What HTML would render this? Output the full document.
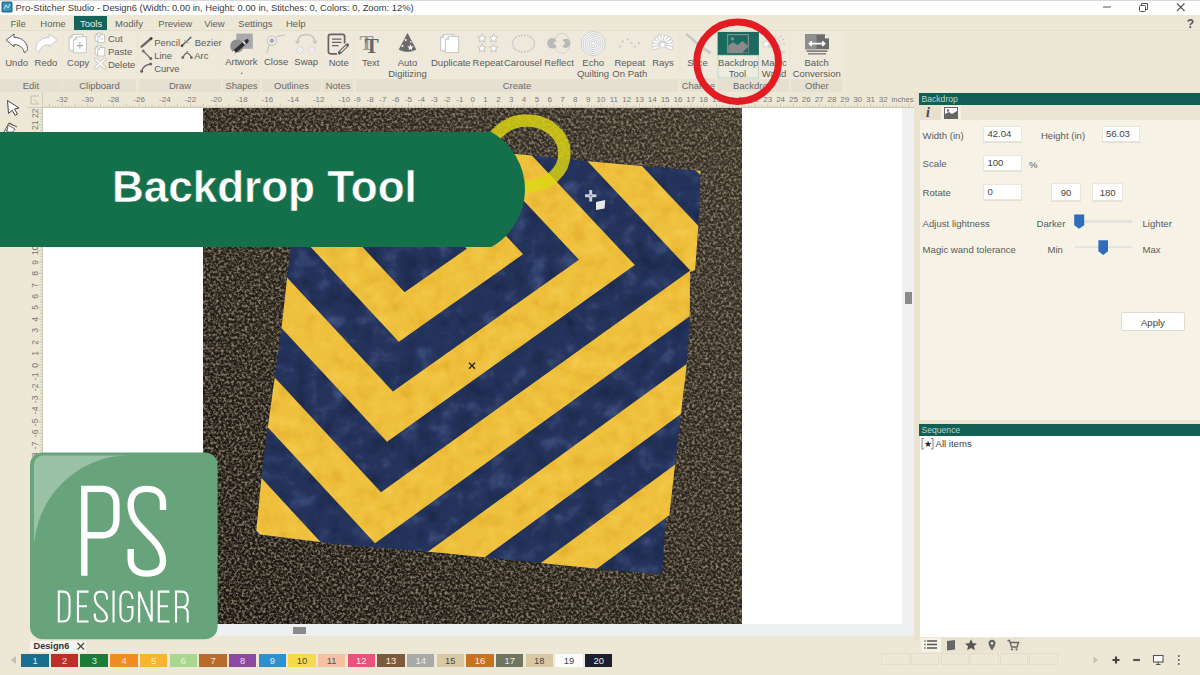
<!DOCTYPE html>
<html><head><meta charset="utf-8">
<style>
*{margin:0;padding:0;box-sizing:border-box}
html,body{width:1200px;height:675px;overflow:hidden;background:#ede7d5;font-family:"Liberation Sans",sans-serif;color:#555}
.a{position:absolute}
.t{position:absolute;white-space:nowrap;line-height:1}
svg{position:absolute;overflow:visible}
</style></head><body>
<div class="a" style="left:0px;top:0px;width:1200px;height:15px;background:#ffffff;"></div>
<div class="a" style="left:0px;top:0px;width:1200px;height:1px;background:#d9d9d9;"></div>
<svg style="left:1px;top:1px" width="12" height="12" viewBox="0 0 12 12"><rect x="0.5" y="0.5" width="11" height="11" rx="1.5" fill="#1f6f96"/><rect x="2" y="2" width="8" height="8" fill="#3f93b8"/><path d="M3,8 L5,4 L7,7 L9,3" stroke="#bfe2ef" stroke-width="1" fill="none"/></svg>
<div class="t" style="left:15.6px;top:3.1px;font-size:9.4px;color:#3a3a3a;font-weight:400;">Pro-Stitcher Studio - Design6 (Width: 0.00 in, Height: 0.00 in, Stitches: 0, Colors: 0, Zoom: 12%)</div>
<svg style="left:1100px;top:2px" width="90" height="11" viewBox="0 0 90 11">
<path d="M3,5 H11" stroke="#555" stroke-width="1"/>
<rect x="39.5" y="3.5" width="6" height="6" fill="none" stroke="#555" stroke-width="1" rx="1"/>
<path d="M41.5,3.5 V1.5 H47.5 V7.5 H45.5" fill="none" stroke="#555" stroke-width="1"/>
<path d="M77,1.5 L84.5,9 M84.5,1.5 L77,9" stroke="#555" stroke-width="1.1"/>
</svg>
<div class="a" style="left:73.6px;top:16px;width:33.1px;height:13.6px;background:#17625a;"></div>
<div class="t" style="left:10.4px;top:18.8px;font-size:9.5px;color:#5e5e5e;font-weight:400;">File</div>
<div class="t" style="left:40.3px;top:18.8px;font-size:9.5px;color:#5e5e5e;font-weight:400;">Home</div>
<div class="t" style="left:115.0px;top:18.8px;font-size:9.5px;color:#5e5e5e;font-weight:400;">Modify</div>
<div class="t" style="left:158.3px;top:18.8px;font-size:9.5px;color:#5e5e5e;font-weight:400;">Preview</div>
<div class="t" style="left:204.3px;top:18.8px;font-size:9.5px;color:#5e5e5e;font-weight:400;">View</div>
<div class="t" style="left:238.3px;top:18.8px;font-size:9.5px;color:#5e5e5e;font-weight:400;">Settings</div>
<div class="t" style="left:286.0px;top:18.8px;font-size:9.5px;color:#5e5e5e;font-weight:400;">Help</div>
<div class="t" style="left:80.0px;top:18.8px;font-size:9.5px;color:#e6f0ec;font-weight:400;">Tools</div>
<div class="t" style="left:1040.5px;top:18.0px;width:300px;text-align:center;font-size:12px;color:#555;font-weight:700;">?</div>
<div class="a" style="left:0px;top:30px;width:1200px;height:1px;background:#e4dece;"></div>
<div class="a" style="left:0px;top:31px;width:61.8px;height:48px;background:#eee9da;"></div>
<div class="a" style="left:0px;top:79px;width:61.8px;height:13px;background:#e5e0d0;"></div>
<div class="t" style="left:-119.1px;top:81.2px;width:300px;text-align:center;font-size:9.5px;color:#6a6a6a;font-weight:400;">Edit</div>
<div class="a" style="left:63px;top:31px;width:73px;height:48px;background:#eee9da;"></div>
<div class="a" style="left:63px;top:79px;width:73px;height:13px;background:#e5e0d0;"></div>
<div class="t" style="left:-50.5px;top:81.2px;width:300px;text-align:center;font-size:9.5px;color:#6a6a6a;font-weight:400;">Clipboard</div>
<div class="a" style="left:139px;top:31px;width:82px;height:48px;background:#eee9da;"></div>
<div class="a" style="left:139px;top:79px;width:82px;height:13px;background:#e5e0d0;"></div>
<div class="t" style="left:30.0px;top:81.2px;width:300px;text-align:center;font-size:9.5px;color:#6a6a6a;font-weight:400;">Draw</div>
<div class="a" style="left:223px;top:31px;width:37px;height:48px;background:#eee9da;"></div>
<div class="a" style="left:223px;top:79px;width:37px;height:13px;background:#e5e0d0;"></div>
<div class="t" style="left:91.5px;top:81.2px;width:300px;text-align:center;font-size:9.5px;color:#6a6a6a;font-weight:400;">Shapes</div>
<div class="a" style="left:262px;top:31px;width:59px;height:48px;background:#eee9da;"></div>
<div class="a" style="left:262px;top:79px;width:59px;height:13px;background:#e5e0d0;"></div>
<div class="t" style="left:141.5px;top:81.2px;width:300px;text-align:center;font-size:9.5px;color:#6a6a6a;font-weight:400;">Outlines</div>
<div class="a" style="left:323px;top:31px;width:30.3px;height:48px;background:#eee9da;"></div>
<div class="a" style="left:323px;top:79px;width:30.3px;height:13px;background:#e5e0d0;"></div>
<div class="t" style="left:188.1px;top:81.2px;width:300px;text-align:center;font-size:9.5px;color:#6a6a6a;font-weight:400;">Notes</div>
<div class="a" style="left:355.8px;top:31px;width:322.5px;height:48px;background:#eee9da;"></div>
<div class="a" style="left:355.8px;top:79px;width:322.5px;height:13px;background:#e5e0d0;"></div>
<div class="t" style="left:367.0px;top:81.2px;width:300px;text-align:center;font-size:9.5px;color:#6a6a6a;font-weight:400;">Create</div>
<div class="a" style="left:680.8px;top:31px;width:35.0px;height:48px;background:#eee9da;"></div>
<div class="a" style="left:680.8px;top:79px;width:35.0px;height:13px;background:#e5e0d0;"></div>
<div class="t" style="left:548.3px;top:81.2px;width:300px;text-align:center;font-size:9.5px;color:#6a6a6a;font-weight:400;">Change</div>
<div class="a" style="left:717px;top:31px;width:72px;height:48px;background:#eee9da;"></div>
<div class="a" style="left:717px;top:79px;width:72px;height:13px;background:#e5e0d0;"></div>
<div class="t" style="left:603.0px;top:81.2px;width:300px;text-align:center;font-size:9.5px;color:#6a6a6a;font-weight:400;">Backdrop</div>
<div class="a" style="left:791.3px;top:31px;width:51.2px;height:48px;background:#eee9da;"></div>
<div class="a" style="left:791.3px;top:79px;width:51.2px;height:13px;background:#e5e0d0;"></div>
<div class="t" style="left:666.9px;top:81.2px;width:300px;text-align:center;font-size:9.5px;color:#6a6a6a;font-weight:400;">Other</div>
<svg style="left:0;top:0" width="1200" height="92"><path d="M6.2,40 L14,34 L14,37.3 C21.5,37.3 27.5,42.5 27.5,48.5 C27.5,50 27,51.5 24.2,52.8 C24,48.5 20,44.6 14,44.6 L14,46.8 Z" fill="#fff" stroke="#4a4a4a" stroke-width="0.9" stroke-linejoin="round"/><path d="M57,40 L49.2,34 L49.2,37.3 C41.7,37.3 36,42.5 36,48.5 C36,50 36.5,51.5 39,52.8 C39.2,48.5 43.2,44.6 49.2,44.6 L49.2,46.8 Z" fill="#fff" stroke="#c4c4c4" stroke-width="0.9" stroke-linejoin="round"/><path d="M72.2,34.5 H82.8 V50.8 H69.2 V37.5 Z M69.2,37.5 H72.2 V34.5" fill="#fff" stroke="#b9b9b9" stroke-width="0.8" stroke-linejoin="round"/><path d="M76.4,36.8 H86.4 V52.8 H73.4 V39.8 Z M73.4,39.8 H76.4 V36.8" fill="#fff" stroke="#b9b9b9" stroke-width="0.8" stroke-linejoin="round"/><path d="M76.7,45.6 H83.1 M79.9,42.4 V48.8" stroke="#a8a8a8" stroke-width="1.1"/><path d="M97.2,33.2 H101.7 V41.2 H95.2 V35.2 Z M95.2,35.2 H97.2 V33.2" fill="#fff" stroke="#b9b9b9" stroke-width="0.8" stroke-linejoin="round"/><path d="M99.7,34.7 H104.7 V42.7 H97.7 V36.7 Z M97.7,36.7 H99.7 V34.7" fill="#fff" stroke="#b9b9b9" stroke-width="0.8" stroke-linejoin="round"/><path d="M99.5,38.8 H103" stroke="#bbb" stroke-width="0.8"/><path d="M97.2,45.9 H101.7 V54.4 H95.2 V47.9 Z M95.2,47.9 H97.2 V45.9" fill="#fff" stroke="#b9b9b9" stroke-width="0.8" stroke-linejoin="round"/><path d="M99.7,47.5 H104.7 V56 H97.7 V49.5 Z M97.7,49.5 H99.7 V47.5" fill="#fff" stroke="#b9b9b9" stroke-width="0.8" stroke-linejoin="round"/><path d="M95.6,59.2 L105,67.8 M105,59.2 L95.6,67.8" stroke="#c2c2c2" stroke-width="3.2" stroke-linecap="round"/><path d="M95.6,59.2 L105,67.8 M105,59.2 L95.6,67.8" stroke="#fff" stroke-width="1.6" stroke-linecap="round"/><path d="M141.6,46.6 L151.5,38.2" stroke="#6a6a6a" stroke-width="2.4" stroke-linecap="round"/><path d="M150,39.4 L151.8,37.9" stroke="#444" stroke-width="2.6"/><path d="M182,45.8 L190.6,37.6" stroke="#555" stroke-width="1.3"/><path d="M184,40.5 L188.5,43" stroke="#999" stroke-width="1"/><circle cx="182" cy="45.8" r="1.2" fill="#333"/><circle cx="190.6" cy="37.6" r="1.1" fill="#777"/><path d="M143.2,51 L150.8,58.6" stroke="#6a6a6a" stroke-width="1.3"/><circle cx="143.2" cy="51" r="1.5" fill="#777"/><circle cx="150.8" cy="58.6" r="1.5" fill="#666"/><path d="M182.8,57.6 Q187.1,48.5 191.4,57.6" stroke="#6a6a6a" stroke-width="1.3" fill="none"/><circle cx="182.8" cy="57.6" r="1.4" fill="#666"/><circle cx="191.4" cy="57.6" r="1.4" fill="#666"/><circle cx="187.1" cy="52" r="1" fill="#888"/><path d="M141.6,71.2 Q143,65.2 150.6,64" stroke="#6a6a6a" stroke-width="1.3" fill="none"/><circle cx="141.6" cy="71.2" r="1.5" fill="#666"/><circle cx="150.6" cy="64" r="1.5" fill="#666"/><rect x="236.3" y="33.6" width="16.5" height="15.2" fill="#a9a9ab"/><circle cx="236.8" cy="46" r="6.6" fill="#8e8e8e"/><path d="M233.6,52.3 L247,41" stroke="#2f2f2f" stroke-width="3.6" stroke-linecap="round"/><path d="M232.3,53.6 L234.8,51.5" stroke="#fff" stroke-width="3"/><path d="M243.6,43.5 L245,42.3" stroke="#ddd" stroke-width="3.8"/><circle cx="241.7" cy="73.3" r="0.8" fill="#666"/><circle cx="271.8" cy="40.6" r="4.6" fill="#f4f4f4" stroke="#c4c4c4" stroke-width="1.2"/><circle cx="271.8" cy="40.6" r="2.4" fill="#a9a9a9"/><path d="M269.3,45 L267,52.8 M276.4,37 Q279,35.5 285,35" stroke="#c4c4c4" stroke-width="1.2" fill="none"/><path d="M297.5,42.5 Q298,34.5 306.2,34.5 Q314.5,34.5 315,42.5" stroke="#c6c6c6" stroke-width="1.6" fill="none"/><path d="M294.8,40.8 L297.5,44.5 L300.5,40.8 Z M312.2,40.8 L315,44.5 L317.8,40.8 Z" fill="#c6c6c6"/><circle cx="300.2" cy="50" r="3.3" fill="#f6f6f6" stroke="#cfcfcf" stroke-width="0.8"/><path d="M298.4,48.2 L302.0,51.8 M302.0,48.2 L298.4,51.8" stroke="#d8d8d8" stroke-width="0.7"/><circle cx="311.8" cy="50" r="3.3" fill="#f6f6f6" stroke="#cfcfcf" stroke-width="0.8"/><path d="M310.0,48.2 L313.6,51.8 M313.6,48.2 L310.0,51.8" stroke="#d8d8d8" stroke-width="0.7"/><path d="M344.6,43.5 V36.6 Q344.6,34.4 342.4,34.4 H330.6 Q328.4,34.4 328.4,36.6 V51.6 Q328.4,53.8 330.6,53.8 H337" stroke="#636363" stroke-width="1.7" fill="none"/><path d="M332,39.2 H341.5 M332,42.4 H341.5 M332,45.6 H338.5" stroke="#636363" stroke-width="1.3"/><path d="M339.5,52.8 L347.4,45" stroke="#636363" stroke-width="3.4" stroke-linecap="round"/><path d="M340.6,51.7 L346.4,46" stroke="#eee9da" stroke-width="1.3"/><text x="359.6" y="49.6" font-family="Liberation Serif" font-weight="700" font-size="21" fill="#9c9c9c">T</text><text x="364.8" y="52.6" font-family="Liberation Serif" font-weight="700" font-size="21" fill="#666">T</text><path d="M407.5,33.6 L399.2,49.5 Q407.5,53.5 415.8,49.5 Z" fill="#6a6a6a" stroke="#6a6a6a" stroke-width="0.8" stroke-linejoin="round"/><polygon points="410.50,44.30 411.35,46.34 413.54,46.51 411.87,47.94 412.38,50.09 410.50,48.94 408.62,50.09 409.13,47.94 407.46,46.51 409.65,46.34" fill="#fff" stroke="none" stroke-width="0.8" stroke-linejoin="round"/><polygon points="405.70,38.40 406.12,39.42 407.22,39.51 406.38,40.22 406.64,41.29 405.70,40.72 404.76,41.29 405.02,40.22 404.18,39.51 405.28,39.42" fill="#fff" stroke="none" stroke-width="0.8" stroke-linejoin="round"/><polygon points="402.50,44.50 402.90,45.45 403.93,45.54 403.14,46.21 403.38,47.21 402.50,46.67 401.62,47.21 401.86,46.21 401.07,45.54 402.10,45.45" fill="#fff" stroke="none" stroke-width="0.8" stroke-linejoin="round"/><polygon points="410.80,40.80 411.12,41.56 411.94,41.63 411.31,42.17 411.51,42.97 410.80,42.54 410.09,42.97 410.29,42.17 409.66,41.63 410.48,41.56" fill="#fff" stroke="none" stroke-width="0.8" stroke-linejoin="round"/><path d="M443.6,34.6 H453.8 V50.8 H440.6 V37.6 Z M440.6,37.6 H443.6 V34.6" fill="#fff" stroke="#b9b9b9" stroke-width="0.8" stroke-linejoin="round"/><path d="M448.4,36.4 H458.6 V52.6 H445.4 V39.4 Z M445.4,39.4 H448.4 V36.4" fill="#fff" stroke="#b9b9b9" stroke-width="0.8" stroke-linejoin="round"/><polygon points="482.00,33.80 483.22,36.73 486.37,36.98 483.97,39.04 484.70,42.12 482.00,40.47 479.30,42.12 480.03,39.04 477.63,36.98 480.78,36.73" fill="#fff" stroke="#bdbdbd" stroke-width="0.9" stroke-linejoin="round"/><polygon points="493.60,33.80 494.82,36.73 497.97,36.98 495.57,39.04 496.30,42.12 493.60,40.47 490.90,42.12 491.63,39.04 489.23,36.98 492.38,36.73" fill="#fff" stroke="#bdbdbd" stroke-width="0.9" stroke-linejoin="round"/><polygon points="482.00,43.80 483.22,46.73 486.37,46.98 483.97,49.04 484.70,52.12 482.00,50.47 479.30,52.12 480.03,49.04 477.63,46.98 480.78,46.73" fill="#fff" stroke="#bdbdbd" stroke-width="0.9" stroke-linejoin="round"/><polygon points="493.60,43.80 494.82,46.73 497.97,46.98 495.57,49.04 496.30,52.12 493.60,50.47 490.90,52.12 491.63,49.04 489.23,46.98 492.38,46.73" fill="#fff" stroke="#bdbdbd" stroke-width="0.9" stroke-linejoin="round"/><circle cx="534.40" cy="43.60" r="0.9" fill="#c3c3c3"/><circle cx="533.95" cy="45.97" r="0.9" fill="#c3c3c3"/><circle cx="532.65" cy="48.14" r="0.9" fill="#c3c3c3"/><circle cx="530.60" cy="49.95" r="0.9" fill="#c3c3c3"/><circle cx="527.97" cy="51.24" r="0.9" fill="#c3c3c3"/><circle cx="524.97" cy="51.91" r="0.9" fill="#c3c3c3"/><circle cx="521.83" cy="51.91" r="0.9" fill="#c3c3c3"/><circle cx="518.83" cy="51.24" r="0.9" fill="#c3c3c3"/><circle cx="516.20" cy="49.95" r="0.9" fill="#c3c3c3"/><circle cx="514.15" cy="48.14" r="0.9" fill="#c3c3c3"/><circle cx="512.85" cy="45.97" r="0.9" fill="#c3c3c3"/><circle cx="512.40" cy="43.60" r="0.9" fill="#c3c3c3"/><circle cx="512.85" cy="41.23" r="0.9" fill="#c3c3c3"/><circle cx="514.15" cy="39.06" r="0.9" fill="#c3c3c3"/><circle cx="516.20" cy="37.25" r="0.9" fill="#c3c3c3"/><circle cx="518.83" cy="35.96" r="0.9" fill="#c3c3c3"/><circle cx="521.83" cy="35.29" r="0.9" fill="#c3c3c3"/><circle cx="524.97" cy="35.29" r="0.9" fill="#c3c3c3"/><circle cx="527.97" cy="35.96" r="0.9" fill="#c3c3c3"/><circle cx="530.60" cy="37.25" r="0.9" fill="#c3c3c3"/><circle cx="532.65" cy="39.06" r="0.9" fill="#c3c3c3"/><circle cx="533.95" cy="41.23" r="0.9" fill="#c3c3c3"/><ellipse cx="562" cy="43.3" rx="7.9" ry="10" fill="none" stroke="#d0d0d0" stroke-width="1"/><path d="M556.8,40.6 A5.2,5.2 0 1 0 556.8,46 L553,43.3 Z" fill="#b9b9b9"/><path d="M562.4,40.2 A4.6,4.6 0 1 1 562.4,46.4 L565.2,43.3 Z" fill="#b9b9b9"/><circle cx="593.2" cy="43.6" r="12" fill="#fafafa" stroke="#c2c2c2" stroke-width="0.8"/><circle cx="593.2" cy="43.6" r="10" fill="none" stroke="#c2c2c2" stroke-width="0.8"/><circle cx="593.2" cy="43.6" r="8" fill="none" stroke="#c2c2c2" stroke-width="0.8"/><circle cx="593.2" cy="43.6" r="6" fill="none" stroke="#c2c2c2" stroke-width="0.8"/><circle cx="593.2" cy="43.6" r="4" fill="none" stroke="#c2c2c2" stroke-width="0.8"/><circle cx="593.2" cy="43.6" r="2" fill="none" stroke="#c2c2c2" stroke-width="0.8"/><circle cx="620.2" cy="46.6" r="1.1" fill="#c6c6c6"/><circle cx="622.8" cy="41.6" r="1.1" fill="#c6c6c6"/><circle cx="627.6" cy="39.4" r="1.1" fill="#c6c6c6"/><circle cx="631.6" cy="43" r="1.1" fill="#c6c6c6"/><circle cx="634.8" cy="46.5" r="1.1" fill="#c6c6c6"/><circle cx="638.8" cy="43.2" r="1.1" fill="#c6c6c6"/><ellipse cx="655.83" cy="47.46" rx="3.9" ry="1.7" transform="rotate(160.0 655.83 47.46)" fill="#fff" stroke="#c6c6c6" stroke-width="0.8"/><ellipse cx="655.40" cy="44.75" rx="3.9" ry="1.7" transform="rotate(182.0 655.40 44.75)" fill="#fff" stroke="#c6c6c6" stroke-width="0.8"/><ellipse cx="656.02" cy="42.07" rx="3.9" ry="1.7" transform="rotate(204.0 656.02 42.07)" fill="#fff" stroke="#c6c6c6" stroke-width="0.8"/><ellipse cx="657.60" cy="39.82" rx="3.9" ry="1.7" transform="rotate(226.0 657.60 39.82)" fill="#fff" stroke="#c6c6c6" stroke-width="0.8"/><ellipse cx="659.90" cy="38.32" rx="3.9" ry="1.7" transform="rotate(248.0 659.90 38.32)" fill="#fff" stroke="#c6c6c6" stroke-width="0.8"/><ellipse cx="662.60" cy="37.80" rx="3.9" ry="1.7" transform="rotate(270.0 662.60 37.80)" fill="#fff" stroke="#c6c6c6" stroke-width="0.8"/><ellipse cx="665.30" cy="38.32" rx="3.9" ry="1.7" transform="rotate(292.0 665.30 38.32)" fill="#fff" stroke="#c6c6c6" stroke-width="0.8"/><ellipse cx="667.60" cy="39.82" rx="3.9" ry="1.7" transform="rotate(314.0 667.60 39.82)" fill="#fff" stroke="#c6c6c6" stroke-width="0.8"/><ellipse cx="669.18" cy="42.07" rx="3.9" ry="1.7" transform="rotate(336.0 669.18 42.07)" fill="#fff" stroke="#c6c6c6" stroke-width="0.8"/><ellipse cx="669.80" cy="44.75" rx="3.9" ry="1.7" transform="rotate(358.0 669.80 44.75)" fill="#fff" stroke="#c6c6c6" stroke-width="0.8"/><ellipse cx="669.37" cy="47.46" rx="3.9" ry="1.7" transform="rotate(380.0 669.37 47.46)" fill="#fff" stroke="#c6c6c6" stroke-width="0.8"/><circle cx="662.6" cy="45" r="2.3" fill="#fff" stroke="#ccc" stroke-width="0.6"/><path d="M686.8,34.6 L701,46.5 L709.7,52.6" stroke="#c9c9c9" stroke-width="2.6" stroke-linecap="round"/><rect x="717.6" y="31.9" width="41.3" height="23.5" fill="#1b6a5f"/><rect x="718.1" y="55.4" width="40.3" height="22.6" fill="#eceddf" stroke="#bcd7cb" stroke-width="1"/><rect x="727.6" y="34.6" width="20.8" height="18" fill="none" stroke="#8a8a8a" stroke-width="1.2"/><path d="M728.2,52 V45.5 L733,42 L737.5,45 L742.5,41 L747.8,45.5 V47.5 L742.8,52 Z" fill="#8a8a8a"/><circle cx="732.4" cy="38.8" r="1.7" fill="#8a8a8a"/><path d="M742.8,52.6 L748.4,47 L748.4,52.6 Z" fill="#1b6a5f"/><path d="M768,45.5 L784,52.5" stroke="#d4d4d4" stroke-width="2.2" stroke-linecap="round"/><polygon points="766.00,39.60 767.16,42.40 770.18,42.64 767.88,44.61 768.59,47.56 766.00,45.98 763.41,47.56 764.12,44.61 761.82,42.64 764.84,42.40" fill="#fff" stroke="#cfcfcf" stroke-width="0.8" stroke-linejoin="round"/><circle cx="775.4" cy="36.2" r="0.8" fill="#bdbdbd"/><circle cx="778.2" cy="38" r="0.8" fill="#bdbdbd"/><circle cx="781.2" cy="36" r="0.8" fill="#bdbdbd"/><circle cx="783.2" cy="39.6" r="0.8" fill="#bdbdbd"/><circle cx="779.8" cy="41.5" r="0.8" fill="#bdbdbd"/><circle cx="784" cy="43.4" r="0.8" fill="#bdbdbd"/><path d="M805,34.2 H825 L829,38.2 V49.2 H805 Z" fill="#6c6c6c"/><path d="M805,34.2 H816.5 V49.2 H805 Z" fill="#8e8e8e"/><path d="M825,34.2 L829,38.2 H825 Z" fill="#fff"/><path d="M809.6,43.6 H824.4 M811.8,41.4 L809.3,43.6 L811.8,45.8 M822.2,41.4 L824.7,43.6 L822.2,45.8" stroke="#fff" stroke-width="1.6" fill="none" stroke-linejoin="round"/><rect x="806.5" y="50.3" width="21" height="1.6" fill="#777"/><rect x="808" y="53" width="18" height="1.6" fill="#8a8a8a"/></svg>
<div class="t" style="left:-133.4px;top:57.6px;width:300px;text-align:center;font-size:9.5px;color:#5b5b5b;font-weight:400;">Undo</div>
<div class="t" style="left:-104.1px;top:57.6px;width:300px;text-align:center;font-size:9.5px;color:#5b5b5b;font-weight:400;">Redo</div>
<div class="t" style="left:-71.9px;top:57.9px;width:300px;text-align:center;font-size:9.5px;color:#5b5b5b;font-weight:400;">Copy</div>
<div class="t" style="left:107.9px;top:34.1px;font-size:9.5px;color:#5b5b5b;font-weight:400;">Cut</div>
<div class="t" style="left:107.9px;top:46.5px;font-size:9.5px;color:#5b5b5b;font-weight:400;">Paste</div>
<div class="t" style="left:107.9px;top:59.6px;font-size:9.5px;color:#5b5b5b;font-weight:400;">Delete</div>
<div class="t" style="left:154.2px;top:37.9px;font-size:9.5px;color:#5b5b5b;font-weight:400;">Pencil</div>
<div class="t" style="left:154.2px;top:51.4px;font-size:9.5px;color:#5b5b5b;font-weight:400;">Line</div>
<div class="t" style="left:154.2px;top:64.1px;font-size:9.5px;color:#5b5b5b;font-weight:400;">Curve</div>
<div class="t" style="left:194.7px;top:37.9px;font-size:9.5px;color:#5b5b5b;font-weight:400;">Bezier</div>
<div class="t" style="left:194.2px;top:51.4px;font-size:9.5px;color:#5b5b5b;font-weight:400;">Arc</div>
<div class="t" style="left:91.3px;top:57.4px;width:300px;text-align:center;font-size:9.5px;color:#5b5b5b;font-weight:400;">Artwork</div>
<div class="t" style="left:126.1px;top:57.4px;width:300px;text-align:center;font-size:9.5px;color:#5b5b5b;font-weight:400;">Close</div>
<div class="t" style="left:156.2px;top:57.4px;width:300px;text-align:center;font-size:9.5px;color:#5b5b5b;font-weight:400;">Swap</div>
<div class="t" style="left:188.7px;top:57.9px;width:300px;text-align:center;font-size:9.5px;color:#5b5b5b;font-weight:400;">Note</div>
<div class="t" style="left:220.7px;top:57.9px;width:300px;text-align:center;font-size:9.5px;color:#5b5b5b;font-weight:400;">Text</div>
<div class="t" style="left:257.5px;top:57.9px;width:300px;text-align:center;font-size:9.5px;color:#5b5b5b;font-weight:400;">Auto</div>
<div class="t" style="left:257.5px;top:69.1px;width:300px;text-align:center;font-size:9.5px;color:#5b5b5b;font-weight:400;">Digitizing</div>
<div class="t" style="left:300.8px;top:57.9px;width:300px;text-align:center;font-size:9.5px;color:#5b5b5b;font-weight:400;">Duplicate</div>
<div class="t" style="left:337.9px;top:57.9px;width:300px;text-align:center;font-size:9.5px;color:#5b5b5b;font-weight:400;">Repeat</div>
<div class="t" style="left:372.9px;top:57.9px;width:300px;text-align:center;font-size:9.5px;color:#5b5b5b;font-weight:400;">Carousel</div>
<div class="t" style="left:409.0px;top:57.9px;width:300px;text-align:center;font-size:9.5px;color:#5b5b5b;font-weight:400;">Reflect</div>
<div class="t" style="left:443.2px;top:57.9px;width:300px;text-align:center;font-size:9.5px;color:#5b5b5b;font-weight:400;">Echo</div>
<div class="t" style="left:443.0px;top:69.1px;width:300px;text-align:center;font-size:9.5px;color:#5b5b5b;font-weight:400;">Quilting</div>
<div class="t" style="left:479.8px;top:57.9px;width:300px;text-align:center;font-size:9.5px;color:#5b5b5b;font-weight:400;">Repeat</div>
<div class="t" style="left:479.8px;top:69.1px;width:300px;text-align:center;font-size:9.5px;color:#5b5b5b;font-weight:400;">On Path</div>
<div class="t" style="left:513.0px;top:57.9px;width:300px;text-align:center;font-size:9.5px;color:#5b5b5b;font-weight:400;">Rays</div>
<div class="t" style="left:547.5px;top:57.9px;width:300px;text-align:center;font-size:9.5px;color:#5b5b5b;font-weight:400;">Slice</div>
<div class="t" style="left:588.2px;top:57.9px;width:300px;text-align:center;font-size:9.5px;color:#5b5b5b;font-weight:400;">Backdrop</div>
<div class="t" style="left:587.5px;top:68.7px;width:300px;text-align:center;font-size:9.5px;color:#5b5b5b;font-weight:400;">Tool</div>
<div class="t" style="left:624.0px;top:57.9px;width:300px;text-align:center;font-size:9.5px;color:#5b5b5b;font-weight:400;">Magic</div>
<div class="t" style="left:624.0px;top:68.7px;width:300px;text-align:center;font-size:9.5px;color:#5b5b5b;font-weight:400;">Wand</div>
<div class="t" style="left:666.7px;top:57.9px;width:300px;text-align:center;font-size:9.5px;color:#5b5b5b;font-weight:400;">Batch</div>
<div class="t" style="left:666.7px;top:68.7px;width:300px;text-align:center;font-size:9.5px;color:#5b5b5b;font-weight:400;">Conversion</div>
<div class="a" style="left:27px;top:92px;width:889px;height:16px;background:#ede7d5;"></div>
<svg style="left:0;top:0" width="1200" height="120"><path d="M46.1,105.7V107.5M49.3,103.5V107.5M52.5,105.7V107.5M55.7,105.0V107.5M58.9,105.7V107.5M62.1,103.5V107.5M65.3,105.7V107.5M68.6,105.0V107.5M71.8,105.7V107.5M75.0,103.5V107.5M78.2,105.7V107.5M81.4,105.0V107.5M84.6,105.7V107.5M87.8,103.5V107.5M91.0,105.7V107.5M94.2,105.0V107.5M97.4,105.7V107.5M100.6,103.5V107.5M103.8,105.7V107.5M107.0,105.0V107.5M110.3,105.7V107.5M113.5,103.5V107.5M116.7,105.7V107.5M119.9,105.0V107.5M123.1,105.7V107.5M126.3,103.5V107.5M129.5,105.7V107.5M132.7,105.0V107.5M135.9,105.7V107.5M139.1,103.5V107.5M142.3,105.7V107.5M145.5,105.0V107.5M148.7,105.7V107.5M151.9,103.5V107.5M155.2,105.7V107.5M158.4,105.0V107.5M161.6,105.7V107.5M164.8,103.5V107.5M168.0,105.7V107.5M171.2,105.0V107.5M174.4,105.7V107.5M177.6,103.5V107.5M180.8,105.7V107.5M184.0,105.0V107.5M187.2,105.7V107.5M190.4,103.5V107.5M193.6,105.7V107.5M196.9,105.0V107.5M200.1,105.7V107.5M203.3,103.5V107.5M206.5,105.7V107.5M209.7,105.0V107.5M212.9,105.7V107.5M216.1,103.5V107.5M219.3,105.7V107.5M222.5,105.0V107.5M225.7,105.7V107.5M228.9,103.5V107.5M232.1,105.7V107.5M235.3,105.0V107.5M238.6,105.7V107.5M241.8,103.5V107.5M245.0,105.7V107.5M248.2,105.0V107.5M251.4,105.7V107.5M254.6,103.5V107.5M257.8,105.7V107.5M261.0,105.0V107.5M264.2,105.7V107.5M267.4,103.5V107.5M270.6,105.7V107.5M273.8,105.0V107.5M277.0,105.7V107.5M280.2,103.5V107.5M283.5,105.7V107.5M286.7,105.0V107.5M289.9,105.7V107.5M293.1,103.5V107.5M296.3,105.7V107.5M299.5,105.0V107.5M302.7,105.7V107.5M305.9,103.5V107.5M309.1,105.7V107.5M312.3,105.0V107.5M315.5,105.7V107.5M318.7,103.5V107.5M321.9,105.7V107.5M325.2,105.0V107.5M328.4,105.7V107.5M331.6,103.5V107.5M334.8,105.7V107.5M338.0,105.0V107.5M341.2,105.7V107.5M344.4,103.5V107.5M347.6,105.7V107.5M350.8,105.0V107.5M354.0,105.7V107.5M357.2,103.5V107.5M360.4,105.7V107.5M363.6,105.0V107.5M366.9,105.7V107.5M370.1,103.5V107.5M373.3,105.7V107.5M376.5,105.0V107.5M379.7,105.7V107.5M382.9,103.5V107.5M386.1,105.7V107.5M389.3,105.0V107.5M392.5,105.7V107.5M395.7,103.5V107.5M398.9,105.7V107.5M402.1,105.0V107.5M405.3,105.7V107.5M408.5,103.5V107.5M411.8,105.7V107.5M415.0,105.0V107.5M418.2,105.7V107.5M421.4,103.5V107.5M424.6,105.7V107.5M427.8,105.0V107.5M431.0,105.7V107.5M434.2,103.5V107.5M437.4,105.7V107.5M440.6,105.0V107.5M443.8,105.7V107.5M447.0,103.5V107.5M450.2,105.7V107.5M453.5,105.0V107.5M456.7,105.7V107.5M459.9,103.5V107.5M463.1,105.7V107.5M466.3,105.0V107.5M469.5,105.7V107.5M472.7,103.5V107.5M475.9,105.7V107.5M479.1,105.0V107.5M482.3,105.7V107.5M485.5,103.5V107.5M488.7,105.7V107.5M491.9,105.0V107.5M495.2,105.7V107.5M498.4,103.5V107.5M501.6,105.7V107.5M504.8,105.0V107.5M508.0,105.7V107.5M511.2,103.5V107.5M514.4,105.7V107.5M517.6,105.0V107.5M520.8,105.7V107.5M524.0,103.5V107.5M527.2,105.7V107.5M530.4,105.0V107.5M533.6,105.7V107.5M536.9,103.5V107.5M540.1,105.7V107.5M543.3,105.0V107.5M546.5,105.7V107.5M549.7,103.5V107.5M552.9,105.7V107.5M556.1,105.0V107.5M559.3,105.7V107.5M562.5,103.5V107.5M565.7,105.7V107.5M568.9,105.0V107.5M572.1,105.7V107.5M575.3,103.5V107.5M578.5,105.7V107.5M581.8,105.0V107.5M585.0,105.7V107.5M588.2,103.5V107.5M591.4,105.7V107.5M594.6,105.0V107.5M597.8,105.7V107.5M601.0,103.5V107.5M604.2,105.7V107.5M607.4,105.0V107.5M610.6,105.7V107.5M613.8,103.5V107.5M617.0,105.7V107.5M620.2,105.0V107.5M623.5,105.7V107.5M626.7,103.5V107.5M629.9,105.7V107.5M633.1,105.0V107.5M636.3,105.7V107.5M639.5,103.5V107.5M642.7,105.7V107.5M645.9,105.0V107.5M649.1,105.7V107.5M652.3,103.5V107.5M655.5,105.7V107.5M658.7,105.0V107.5M661.9,105.7V107.5M665.1,103.5V107.5M668.4,105.7V107.5M671.6,105.0V107.5M674.8,105.7V107.5M678.0,103.5V107.5M681.2,105.7V107.5M684.4,105.0V107.5M687.6,105.7V107.5M690.8,103.5V107.5M694.0,105.7V107.5M697.2,105.0V107.5M700.4,105.7V107.5M703.6,103.5V107.5M706.8,105.7V107.5M710.1,105.0V107.5M713.3,105.7V107.5M716.5,103.5V107.5M719.7,105.7V107.5M722.9,105.0V107.5M726.1,105.7V107.5M729.3,103.5V107.5M732.5,105.7V107.5M735.7,105.0V107.5M738.9,105.7V107.5M742.1,103.5V107.5M745.3,105.7V107.5M748.5,105.0V107.5M751.8,105.7V107.5M755.0,103.5V107.5M758.2,105.7V107.5M761.4,105.0V107.5M764.6,105.7V107.5M767.8,103.5V107.5M771.0,105.7V107.5M774.2,105.0V107.5M777.4,105.7V107.5M780.6,103.5V107.5M783.8,105.7V107.5M787.0,105.0V107.5M790.2,105.7V107.5M793.5,103.5V107.5M796.7,105.7V107.5M799.9,105.0V107.5M803.1,105.7V107.5M806.3,103.5V107.5M809.5,105.7V107.5M812.7,105.0V107.5M815.9,105.7V107.5M819.1,103.5V107.5M822.3,105.7V107.5M825.5,105.0V107.5M828.7,105.7V107.5M831.9,103.5V107.5M835.1,105.7V107.5M838.4,105.0V107.5M841.6,105.7V107.5M844.8,103.5V107.5M848.0,105.7V107.5M851.2,105.0V107.5M854.4,105.7V107.5M857.6,103.5V107.5M860.8,105.7V107.5M864.0,105.0V107.5M867.2,105.7V107.5M870.4,103.5V107.5M873.6,105.7V107.5M876.8,105.0V107.5M880.1,105.7V107.5M883.3,103.5V107.5M886.5,105.7V107.5M889.7,105.0V107.5M892.9,105.7V107.5M896.1,103.5V107.5M899.3,105.7V107.5M902.5,105.0V107.5M905.7,105.7V107.5M908.9,103.5V107.5" stroke="#c4bdab" stroke-width="0.8"/><path d="M43,107.5H916" stroke="#cfc8b6" stroke-width="1"/></svg>
<div class="t" style="left:-87.9px;top:95.5px;width:300px;text-align:center;font-size:8px;color:#777;font-weight:400;">-32</div>
<div class="t" style="left:-62.2px;top:95.5px;width:300px;text-align:center;font-size:8px;color:#777;font-weight:400;">-30</div>
<div class="t" style="left:-36.5px;top:95.5px;width:300px;text-align:center;font-size:8px;color:#777;font-weight:400;">-28</div>
<div class="t" style="left:-10.9px;top:95.5px;width:300px;text-align:center;font-size:8px;color:#777;font-weight:400;">-26</div>
<div class="t" style="left:14.8px;top:95.5px;width:300px;text-align:center;font-size:8px;color:#777;font-weight:400;">-24</div>
<div class="t" style="left:40.4px;top:95.5px;width:300px;text-align:center;font-size:8px;color:#777;font-weight:400;">-22</div>
<div class="t" style="left:66.1px;top:95.5px;width:300px;text-align:center;font-size:8px;color:#777;font-weight:400;">-20</div>
<div class="t" style="left:91.8px;top:95.5px;width:300px;text-align:center;font-size:8px;color:#777;font-weight:400;">-18</div>
<div class="t" style="left:117.4px;top:95.5px;width:300px;text-align:center;font-size:8px;color:#777;font-weight:400;">-16</div>
<div class="t" style="left:143.1px;top:95.5px;width:300px;text-align:center;font-size:8px;color:#777;font-weight:400;">-14</div>
<div class="t" style="left:168.7px;top:95.5px;width:300px;text-align:center;font-size:8px;color:#777;font-weight:400;">-12</div>
<div class="t" style="left:194.4px;top:95.5px;width:300px;text-align:center;font-size:8px;color:#777;font-weight:400;">-10</div>
<div class="t" style="left:207.2px;top:95.5px;width:300px;text-align:center;font-size:8px;color:#777;font-weight:400;">-9</div>
<div class="t" style="left:220.1px;top:95.5px;width:300px;text-align:center;font-size:8px;color:#777;font-weight:400;">-8</div>
<div class="t" style="left:232.9px;top:95.5px;width:300px;text-align:center;font-size:8px;color:#777;font-weight:400;">-7</div>
<div class="t" style="left:245.7px;top:95.5px;width:300px;text-align:center;font-size:8px;color:#777;font-weight:400;">-6</div>
<div class="t" style="left:258.5px;top:95.5px;width:300px;text-align:center;font-size:8px;color:#777;font-weight:400;">-5</div>
<div class="t" style="left:271.4px;top:95.5px;width:300px;text-align:center;font-size:8px;color:#777;font-weight:400;">-4</div>
<div class="t" style="left:284.2px;top:95.5px;width:300px;text-align:center;font-size:8px;color:#777;font-weight:400;">-3</div>
<div class="t" style="left:297.0px;top:95.5px;width:300px;text-align:center;font-size:8px;color:#777;font-weight:400;">-2</div>
<div class="t" style="left:309.9px;top:95.5px;width:300px;text-align:center;font-size:8px;color:#777;font-weight:400;">-1</div>
<div class="t" style="left:322.7px;top:95.5px;width:300px;text-align:center;font-size:8px;color:#777;font-weight:400;">0</div>
<div class="t" style="left:335.5px;top:95.5px;width:300px;text-align:center;font-size:8px;color:#777;font-weight:400;">1</div>
<div class="t" style="left:348.4px;top:95.5px;width:300px;text-align:center;font-size:8px;color:#777;font-weight:400;">2</div>
<div class="t" style="left:361.2px;top:95.5px;width:300px;text-align:center;font-size:8px;color:#777;font-weight:400;">3</div>
<div class="t" style="left:374.0px;top:95.5px;width:300px;text-align:center;font-size:8px;color:#777;font-weight:400;">4</div>
<div class="t" style="left:386.9px;top:95.5px;width:300px;text-align:center;font-size:8px;color:#777;font-weight:400;">5</div>
<div class="t" style="left:399.7px;top:95.5px;width:300px;text-align:center;font-size:8px;color:#777;font-weight:400;">6</div>
<div class="t" style="left:412.5px;top:95.5px;width:300px;text-align:center;font-size:8px;color:#777;font-weight:400;">7</div>
<div class="t" style="left:425.3px;top:95.5px;width:300px;text-align:center;font-size:8px;color:#777;font-weight:400;">8</div>
<div class="t" style="left:438.2px;top:95.5px;width:300px;text-align:center;font-size:8px;color:#777;font-weight:400;">9</div>
<div class="t" style="left:451.0px;top:95.5px;width:300px;text-align:center;font-size:8px;color:#777;font-weight:400;">10</div>
<div class="t" style="left:463.8px;top:95.5px;width:300px;text-align:center;font-size:8px;color:#777;font-weight:400;">11</div>
<div class="t" style="left:476.7px;top:95.5px;width:300px;text-align:center;font-size:8px;color:#777;font-weight:400;">12</div>
<div class="t" style="left:489.5px;top:95.5px;width:300px;text-align:center;font-size:8px;color:#777;font-weight:400;">13</div>
<div class="t" style="left:502.3px;top:95.5px;width:300px;text-align:center;font-size:8px;color:#777;font-weight:400;">14</div>
<div class="t" style="left:515.1px;top:95.5px;width:300px;text-align:center;font-size:8px;color:#777;font-weight:400;">15</div>
<div class="t" style="left:528.0px;top:95.5px;width:300px;text-align:center;font-size:8px;color:#777;font-weight:400;">16</div>
<div class="t" style="left:540.8px;top:95.5px;width:300px;text-align:center;font-size:8px;color:#777;font-weight:400;">17</div>
<div class="t" style="left:553.6px;top:95.5px;width:300px;text-align:center;font-size:8px;color:#777;font-weight:400;">18</div>
<div class="t" style="left:566.5px;top:95.5px;width:300px;text-align:center;font-size:8px;color:#777;font-weight:400;">19</div>
<div class="t" style="left:579.3px;top:95.5px;width:300px;text-align:center;font-size:8px;color:#777;font-weight:400;">20</div>
<div class="t" style="left:592.1px;top:95.5px;width:300px;text-align:center;font-size:8px;color:#777;font-weight:400;">21</div>
<div class="t" style="left:605.0px;top:95.5px;width:300px;text-align:center;font-size:8px;color:#777;font-weight:400;">22</div>
<div class="t" style="left:617.8px;top:95.5px;width:300px;text-align:center;font-size:8px;color:#777;font-weight:400;">23</div>
<div class="t" style="left:630.6px;top:95.5px;width:300px;text-align:center;font-size:8px;color:#777;font-weight:400;">24</div>
<div class="t" style="left:643.5px;top:95.5px;width:300px;text-align:center;font-size:8px;color:#777;font-weight:400;">25</div>
<div class="t" style="left:656.3px;top:95.5px;width:300px;text-align:center;font-size:8px;color:#777;font-weight:400;">26</div>
<div class="t" style="left:669.1px;top:95.5px;width:300px;text-align:center;font-size:8px;color:#777;font-weight:400;">27</div>
<div class="t" style="left:681.9px;top:95.5px;width:300px;text-align:center;font-size:8px;color:#777;font-weight:400;">28</div>
<div class="t" style="left:694.8px;top:95.5px;width:300px;text-align:center;font-size:8px;color:#777;font-weight:400;">29</div>
<div class="t" style="left:707.6px;top:95.5px;width:300px;text-align:center;font-size:8px;color:#777;font-weight:400;">30</div>
<div class="t" style="left:720.4px;top:95.5px;width:300px;text-align:center;font-size:8px;color:#777;font-weight:400;">31</div>
<div class="t" style="left:733.3px;top:95.5px;width:300px;text-align:center;font-size:8px;color:#777;font-weight:400;">32</div>
<div class="t" style="left:752.5px;top:95.7px;width:300px;text-align:center;font-size:7.6px;color:#777;font-weight:400;">inches</div>
<svg style="left:27px;top:92px" width="16" height="16"><path d="M4,4 H12 M4,4 V12 H12 M7,7 L11,11" stroke="#b9b2a0" stroke-width="0.8" fill="none"/><path d="M15.5,0 V16 M0,15.5 H16" stroke="#d3ccba" stroke-width="1"/></svg>
<svg style="left:0;top:0" width="60" height="675"><path d="M40.0,622.0H42.5M40.7,619.2H42.5M38.5,616.3H42.5M40.7,613.5H42.5M40.0,610.6H42.5M40.7,607.7H42.5M38.5,604.9H42.5M40.7,602.0H42.5M40.0,599.2H42.5M40.7,596.3H42.5M38.5,593.5H42.5M40.7,590.6H42.5M40.0,587.7H42.5M40.7,584.9H42.5M38.5,582.0H42.5M40.7,579.2H42.5M40.0,576.3H42.5M40.7,573.5H42.5M38.5,570.6H42.5M40.7,567.7H42.5M40.0,564.9H42.5M40.7,562.0H42.5M38.5,559.2H42.5M40.7,556.3H42.5M40.0,553.5H42.5M40.7,550.6H42.5M38.5,547.7H42.5M40.7,544.9H42.5M40.0,542.0H42.5M40.7,539.2H42.5M38.5,536.3H42.5M40.7,533.5H42.5M40.0,530.6H42.5M40.7,527.7H42.5M38.5,524.9H42.5M40.7,522.0H42.5M40.0,519.2H42.5M40.7,516.3H42.5M38.5,513.5H42.5M40.7,510.6H42.5M40.0,507.7H42.5M40.7,504.9H42.5M38.5,502.0H42.5M40.7,499.2H42.5M40.0,496.3H42.5M40.7,493.4H42.5M38.5,490.6H42.5M40.7,487.7H42.5M40.0,484.9H42.5M40.7,482.0H42.5M38.5,479.2H42.5M40.7,476.3H42.5M40.0,473.4H42.5M40.7,470.6H42.5M38.5,467.7H42.5M40.7,464.9H42.5M40.0,462.0H42.5M40.7,459.2H42.5M38.5,456.3H42.5M40.7,453.4H42.5M40.0,450.6H42.5M40.7,447.7H42.5M38.5,444.9H42.5M40.7,442.0H42.5M40.0,439.2H42.5M40.7,436.3H42.5M38.5,433.4H42.5M40.7,430.6H42.5M40.0,427.7H42.5M40.7,424.9H42.5M38.5,422.0H42.5M40.7,419.2H42.5M40.0,416.3H42.5M40.7,413.4H42.5M38.5,410.6H42.5M40.7,407.7H42.5M40.0,404.9H42.5M40.7,402.0H42.5M38.5,399.1H42.5M40.7,396.3H42.5M40.0,393.4H42.5M40.7,390.6H42.5M38.5,387.7H42.5M40.7,384.9H42.5M40.0,382.0H42.5M40.7,379.1H42.5M38.5,376.3H42.5M40.7,373.4H42.5M40.0,370.6H42.5M40.7,367.7H42.5M38.5,364.9H42.5M40.7,362.0H42.5M40.0,359.1H42.5M40.7,356.3H42.5M38.5,353.4H42.5M40.7,350.6H42.5M40.0,347.7H42.5M40.7,344.9H42.5M38.5,342.0H42.5M40.7,339.1H42.5M40.0,336.3H42.5M40.7,333.4H42.5M38.5,330.6H42.5M40.7,327.7H42.5M40.0,324.9H42.5M40.7,322.0H42.5M38.5,319.1H42.5M40.7,316.3H42.5M40.0,313.4H42.5M40.7,310.6H42.5M38.5,307.7H42.5M40.7,304.9H42.5M40.0,302.0H42.5M40.7,299.1H42.5M38.5,296.3H42.5M40.7,293.4H42.5M40.0,290.6H42.5M40.7,287.7H42.5M38.5,284.9H42.5M40.7,282.0H42.5M40.0,279.1H42.5M40.7,276.3H42.5M38.5,273.4H42.5M40.7,270.6H42.5M40.0,267.7H42.5M40.7,264.8H42.5M38.5,262.0H42.5M40.7,259.1H42.5M40.0,256.3H42.5M40.7,253.4H42.5M38.5,250.6H42.5M40.7,247.7H42.5M40.0,244.8H42.5M40.7,242.0H42.5M38.5,239.1H42.5M40.7,236.3H42.5M40.0,233.4H42.5M40.7,230.6H42.5M38.5,227.7H42.5M40.7,224.8H42.5M40.0,222.0H42.5M40.7,219.1H42.5M38.5,216.3H42.5M40.7,213.4H42.5M40.0,210.6H42.5M40.7,207.7H42.5M38.5,204.8H42.5M40.7,202.0H42.5M40.0,199.1H42.5M40.7,196.3H42.5M38.5,193.4H42.5M40.7,190.6H42.5M40.0,187.7H42.5M40.7,184.8H42.5M38.5,182.0H42.5M40.7,179.1H42.5M40.0,176.3H42.5M40.7,173.4H42.5M38.5,170.6H42.5M40.7,167.7H42.5M40.0,164.8H42.5M40.7,162.0H42.5M38.5,159.1H42.5M40.7,156.3H42.5M40.0,153.4H42.5M40.7,150.5H42.5M38.5,147.7H42.5M40.7,144.8H42.5M40.0,142.0H42.5M40.7,139.1H42.5M38.5,136.3H42.5M40.7,133.4H42.5M40.0,130.5H42.5M40.7,127.7H42.5M38.5,124.8H42.5M40.7,122.0H42.5M40.0,119.1H42.5M40.7,116.3H42.5M38.5,113.4H42.5M40.7,110.5H42.5" stroke="#c4bdab" stroke-width="0.8"/><path d="M42.5,108V624" stroke="#cfc8b6" stroke-width="1"/></svg>
<div class="t" style="left:14.5px;top:109.1px;width:40px;text-align:center;font-size:8.6px;color:#777;transform:rotate(-90deg)">22</div>
<div class="t" style="left:14.5px;top:120.5px;width:40px;text-align:center;font-size:8.6px;color:#777;transform:rotate(-90deg)">21</div>
<div class="t" style="left:14.5px;top:132.0px;width:40px;text-align:center;font-size:8.6px;color:#777;transform:rotate(-90deg)">20</div>
<div class="t" style="left:14.5px;top:143.4px;width:40px;text-align:center;font-size:8.6px;color:#777;transform:rotate(-90deg)">19</div>
<div class="t" style="left:14.5px;top:154.8px;width:40px;text-align:center;font-size:8.6px;color:#777;transform:rotate(-90deg)">18</div>
<div class="t" style="left:14.5px;top:166.2px;width:40px;text-align:center;font-size:8.6px;color:#777;transform:rotate(-90deg)">17</div>
<div class="t" style="left:14.5px;top:177.7px;width:40px;text-align:center;font-size:8.6px;color:#777;transform:rotate(-90deg)">16</div>
<div class="t" style="left:14.5px;top:189.1px;width:40px;text-align:center;font-size:8.6px;color:#777;transform:rotate(-90deg)">15</div>
<div class="t" style="left:14.5px;top:200.5px;width:40px;text-align:center;font-size:8.6px;color:#777;transform:rotate(-90deg)">14</div>
<div class="t" style="left:14.5px;top:212.0px;width:40px;text-align:center;font-size:8.6px;color:#777;transform:rotate(-90deg)">13</div>
<div class="t" style="left:14.5px;top:223.4px;width:40px;text-align:center;font-size:8.6px;color:#777;transform:rotate(-90deg)">12</div>
<div class="t" style="left:14.5px;top:234.8px;width:40px;text-align:center;font-size:8.6px;color:#777;transform:rotate(-90deg)">11</div>
<div class="t" style="left:14.5px;top:246.3px;width:40px;text-align:center;font-size:8.6px;color:#777;transform:rotate(-90deg)">10</div>
<div class="t" style="left:14.5px;top:257.7px;width:40px;text-align:center;font-size:8.6px;color:#777;transform:rotate(-90deg)">9</div>
<div class="t" style="left:14.5px;top:269.1px;width:40px;text-align:center;font-size:8.6px;color:#777;transform:rotate(-90deg)">8</div>
<div class="t" style="left:14.5px;top:280.6px;width:40px;text-align:center;font-size:8.6px;color:#777;transform:rotate(-90deg)">7</div>
<div class="t" style="left:14.5px;top:292.0px;width:40px;text-align:center;font-size:8.6px;color:#777;transform:rotate(-90deg)">6</div>
<div class="t" style="left:14.5px;top:303.4px;width:40px;text-align:center;font-size:8.6px;color:#777;transform:rotate(-90deg)">5</div>
<div class="t" style="left:14.5px;top:314.8px;width:40px;text-align:center;font-size:8.6px;color:#777;transform:rotate(-90deg)">4</div>
<div class="t" style="left:14.5px;top:326.3px;width:40px;text-align:center;font-size:8.6px;color:#777;transform:rotate(-90deg)">3</div>
<div class="t" style="left:14.5px;top:337.7px;width:40px;text-align:center;font-size:8.6px;color:#777;transform:rotate(-90deg)">2</div>
<div class="t" style="left:14.5px;top:349.1px;width:40px;text-align:center;font-size:8.6px;color:#777;transform:rotate(-90deg)">1</div>
<div class="t" style="left:14.5px;top:360.6px;width:40px;text-align:center;font-size:8.6px;color:#777;transform:rotate(-90deg)">0</div>
<div class="t" style="left:14.5px;top:372.0px;width:40px;text-align:center;font-size:8.6px;color:#777;transform:rotate(-90deg)">-1</div>
<div class="t" style="left:14.5px;top:383.4px;width:40px;text-align:center;font-size:8.6px;color:#777;transform:rotate(-90deg)">-2</div>
<div class="t" style="left:14.5px;top:394.8px;width:40px;text-align:center;font-size:8.6px;color:#777;transform:rotate(-90deg)">-3</div>
<div class="t" style="left:14.5px;top:406.3px;width:40px;text-align:center;font-size:8.6px;color:#777;transform:rotate(-90deg)">-4</div>
<div class="t" style="left:14.5px;top:417.7px;width:40px;text-align:center;font-size:8.6px;color:#777;transform:rotate(-90deg)">-5</div>
<div class="t" style="left:14.5px;top:429.1px;width:40px;text-align:center;font-size:8.6px;color:#777;transform:rotate(-90deg)">-6</div>
<div class="t" style="left:14.5px;top:440.6px;width:40px;text-align:center;font-size:8.6px;color:#777;transform:rotate(-90deg)">-7</div>
<div class="t" style="left:14.5px;top:452.0px;width:40px;text-align:center;font-size:8.6px;color:#777;transform:rotate(-90deg)">-8</div>
<div class="t" style="left:14.5px;top:463.4px;width:40px;text-align:center;font-size:8.6px;color:#777;transform:rotate(-90deg)">-9</div>
<div class="t" style="left:14.5px;top:474.9px;width:40px;text-align:center;font-size:8.6px;color:#777;transform:rotate(-90deg)">-10</div>
<div class="t" style="left:14.5px;top:486.3px;width:40px;text-align:center;font-size:8.6px;color:#777;transform:rotate(-90deg)">-11</div>
<div class="t" style="left:14.5px;top:497.7px;width:40px;text-align:center;font-size:8.6px;color:#777;transform:rotate(-90deg)">-12</div>
<div class="t" style="left:14.5px;top:509.2px;width:40px;text-align:center;font-size:8.6px;color:#777;transform:rotate(-90deg)">-13</div>
<div class="t" style="left:14.5px;top:520.6px;width:40px;text-align:center;font-size:8.6px;color:#777;transform:rotate(-90deg)">-14</div>
<div class="t" style="left:14.5px;top:532.0px;width:40px;text-align:center;font-size:8.6px;color:#777;transform:rotate(-90deg)">-15</div>
<div class="t" style="left:14.5px;top:543.4px;width:40px;text-align:center;font-size:8.6px;color:#777;transform:rotate(-90deg)">-16</div>
<div class="t" style="left:14.5px;top:554.9px;width:40px;text-align:center;font-size:8.6px;color:#777;transform:rotate(-90deg)">-17</div>
<div class="t" style="left:14.5px;top:566.3px;width:40px;text-align:center;font-size:8.6px;color:#777;transform:rotate(-90deg)">-18</div>
<div class="t" style="left:14.5px;top:577.7px;width:40px;text-align:center;font-size:8.6px;color:#777;transform:rotate(-90deg)">-19</div>
<div class="t" style="left:14.5px;top:589.2px;width:40px;text-align:center;font-size:8.6px;color:#777;transform:rotate(-90deg)">-20</div>
<div class="t" style="left:14.5px;top:600.6px;width:40px;text-align:center;font-size:8.6px;color:#777;transform:rotate(-90deg)">-21</div>
<div class="t" style="left:14.5px;top:612.0px;width:40px;text-align:center;font-size:8.6px;color:#777;transform:rotate(-90deg)">-22</div>
<svg style="left:0;top:92px" width="27" height="50">
<path d="M7.5,8.5 L19,16 L14.5,17 L17.5,22 L15,23.3 L12.2,18.3 L8.5,21.5 Z" fill="#fff" stroke="#444" stroke-width="1" stroke-linejoin="round"/>
<path d="M4,40 L9,31 L13,33 M9,31 L17,35 M6,38 L11,43" stroke="#555" stroke-width="1" fill="none"/>
<path d="M8,33 L15,37 L13,40 L7,40 Z" fill="#fff" stroke="#555" stroke-width="0.8"/>
</svg>
<div class="a" style="left:43px;top:108px;width:859px;height:516px;background:#ffffff;"></div>
<div class="a" style="left:902px;top:108px;width:12px;height:516px;background:#eef0f1;"></div>
<div class="a" style="left:43px;top:624px;width:871px;height:12px;background:#eef0f1;"></div>
<div class="a" style="left:904.7px;top:291.8px;width:7.3px;height:12px;background:#8a8a8a;"></div>
<div class="a" style="left:292.5px;top:627px;width:13.5px;height:6.8px;background:#8a8a8a;"></div>
<div class="a" style="left:914px;top:92px;width:6px;height:548px;background:#e9e3cf;"></div>
<svg style="left:203px;top:108px" width="539" height="516">
<defs>
<linearGradient id="cg" x1="1" y1="0" x2="0" y2="1"><stop offset="0" stop-color="#3a3229"/><stop offset="1" stop-color="#191511"/></linearGradient>
<filter id="carp" x="0" y="0" width="100%" height="100%" color-interpolation-filters="sRGB">
 <feTurbulence type="fractalNoise" baseFrequency="0.38" numOctaves="3" seed="7"/>
 <feColorMatrix type="matrix" values="0 0 0 0 0.55  0 0 0 0 0.51  0 0 0 0 0.42  2.6 0 0 0 -1.05"/>
</filter>
</defs>
<rect width="539" height="516" fill="url(#cg)"/>
<rect width="539" height="516" filter="url(#carp)"/>
</svg>
<svg style="left:0;top:0" width="1200" height="675" viewBox="0 0 1200 675">
 <defs><clipPath id="qc"><polygon points="304,134.3 532.5,155.4 588.2,161.3 641.5,166 700.4,170.7 698.7,222 695.1,270 690,272 689.8,320 686.2,370 682.5,400 675.6,460 669.2,517 665.6,518.5 662.1,574.1 620,571.1 440,552.8 340,544.5 255.9,534.1 263.3,460 281.3,330 290.2,250"/></clipPath></defs>
 <filter id="mot" x="0" y="0" width="100%" height="100%" color-interpolation-filters="sRGB">
  <feTurbulence type="fractalNoise" baseFrequency="0.055" numOctaves="3" seed="11" result="n"/>
  <feColorMatrix in="n" type="matrix" values="0 0 0 0 0.5  0 0 0 0 0.6  0 0 0 0 0.85  0.8 0 0 0 -0.43" result="lt"/>
  <feColorMatrix in="n" type="matrix" values="0 0 0 0 0.03  0 0 0 0 0.05  0 0 0 0 0.12  -0.8 0 0 0 0.37" result="dk"/>
  <feMerge><feMergeNode in="dk"/><feMergeNode in="lt"/></feMerge>
 </filter>
 <polygon points="304,134.3 532.5,155.4 588.2,161.3 641.5,166 700.4,170.7 698.7,222 695.1,270 690,272 689.8,320 686.2,370 682.5,400 675.6,460 669.2,517 665.6,518.5 662.1,574.1 620,571.1 440,552.8 340,544.5 255.9,534.1 263.3,460 281.3,330 290.2,250" fill="#24335b"/>
 <rect x="250" y="130" width="455" height="450" filter="url(#mot)" clip-path="url(#qc)"/>
 <g clip-path="url(#qc)" fill="#efc03c" fill-rule="evenodd"><path d="M421.8,146.0 L523.1,254.2 L398.8,341.7 L296.7,232.0Z M416.1,194.4 L466.8,248.7 L404.6,292.2 L353.7,237.6Z"/><path d="M433.1,50.3 L634.8,265.1 L387.0,441.7 L182.0,220.7Z M427.5,98.0 L579.0,259.7 L392.9,391.5 L239.5,226.4Z"/><path d="M444.2,-44.1 L745.5,276.0 L375.0,543.2 L66.3,209.4Z M438.7,2.9 L690.3,270.6 L381.0,492.2 L124.3,215.1Z"/><path d="M455.2,-137.1 L855.3,286.7 L362.9,646.2 L-50.5,197.9Z M449.7,-90.8 L800.5,281.4 L369.0,594.5 L8.0,203.7Z"/><path d="M466.0,-228.8 L964.1,297.4 L350.6,750.7 L-168.3,186.4Z M460.6,-183.1 L909.8,292.1 L356.7,698.3 L-109.3,192.2Z"/></g>
 <defs><clipPath id="yc"><path clip-rule="evenodd" d="M421.8,146.0 L523.1,254.2 L398.8,341.7 L296.7,232.0Z M416.1,194.4 L466.8,248.7 L404.6,292.2 L353.7,237.6Z"/><path clip-rule="evenodd" d="M433.1,50.3 L634.8,265.1 L387.0,441.7 L182.0,220.7Z M427.5,98.0 L579.0,259.7 L392.9,391.5 L239.5,226.4Z"/><path clip-rule="evenodd" d="M444.2,-44.1 L745.5,276.0 L375.0,543.2 L66.3,209.4Z M438.7,2.9 L690.3,270.6 L381.0,492.2 L124.3,215.1Z"/><path clip-rule="evenodd" d="M455.2,-137.1 L855.3,286.7 L362.9,646.2 L-50.5,197.9Z M449.7,-90.8 L800.5,281.4 L369.0,594.5 L8.0,203.7Z"/><path clip-rule="evenodd" d="M466.0,-228.8 L964.1,297.4 L350.6,750.7 L-168.3,186.4Z M460.6,-183.1 L909.8,292.1 L356.7,698.3 L-109.3,192.2Z"/></clipPath>
 <filter id="ymot" x="0" y="0" width="100%" height="100%" color-interpolation-filters="sRGB">
  <feTurbulence type="fractalNoise" baseFrequency="0.07" numOctaves="3" seed="5" result="n"/>
  <feColorMatrix in="n" type="matrix" values="0 0 0 0 1  0 0 0 0 0.9  0 0 0 0 0.5  0.8 0 0 0 -0.42" result="lt"/>
  <feColorMatrix in="n" type="matrix" values="0 0 0 0 0.8  0 0 0 0 0.55  0 0 0 0 0.05  -0.8 0 0 0 0.37" result="dk"/>
  <feMerge><feMergeNode in="dk"/><feMergeNode in="lt"/></feMerge>
 </filter></defs>
 <g clip-path="url(#qc)"><rect x="250" y="130" width="455" height="450" filter="url(#ymot)" clip-path="url(#yc)"/></g>
 <path d="M469,362.8 L475,368.8 M475,362.8 L469,368.8" stroke="#222" stroke-width="1.3"/>
 <path d="M585,195.7 H596.4 M590.7,190 V201.4" stroke="#c9ccd6" stroke-width="3"/><circle cx="590.7" cy="195.7" r="0.8" fill="#555"/>
 <path d="M596,201.9 L605.2,199.9 L604.6,208.4 L596,209.9 Z" fill="#e8e8ec"/>
</svg>
<div class="a" style="left:919px;top:93px;width:281px;height:12px;background:#125f56;"></div>
<div class="t" style="left:921.5px;top:95.1px;font-size:8.6px;color:#b9d8cf;font-weight:400;">Backdrop</div>
<div class="a" style="left:919px;top:105px;width:281px;height:15px;background:#ebe5d3;"></div>
<div class="a" style="left:920px;top:106px;width:21px;height:14px;background:#e7e1ce;"></div>
<div class="a" style="left:941px;top:106px;width:20px;height:14px;background:#f3f0e5;"></div>
<div class="t" style="left:926px;top:106px;font-family:'Liberation Serif';font-style:italic;font-weight:700;font-size:14px;color:#444">i</div>
<svg style="left:944px;top:107px" width="14" height="12"><rect x="0.5" y="0.5" width="13" height="11" fill="#fff" stroke="#666" stroke-width="1"/><path d="M1,11 V7 L5,5 L8,7 L13,4 V11 Z" fill="#666"/><circle cx="4" cy="3.5" r="1.3" fill="#666"/></svg>
<div class="a" style="left:920px;top:120px;width:280px;height:300px;background:#f6f3e6;"></div>
<div class="t" style="left:922.6px;top:130.6px;font-size:9.6px;color:#5a5a5a;font-weight:400;">Width (in)</div>
<div class="t" style="left:1040.9px;top:130.6px;font-size:9.6px;color:#5a5a5a;font-weight:400;">Height (in)</div>
<div class="t" style="left:922.6px;top:159.1px;font-size:9.6px;color:#5a5a5a;font-weight:400;">Scale</div>
<div class="t" style="left:922.6px;top:187.6px;font-size:9.6px;color:#5a5a5a;font-weight:400;">Rotate</div>
<div class="t" style="left:1029.0px;top:159.6px;font-size:9.6px;color:#5a5a5a;font-weight:400;">%</div>
<div class="a" style="left:983.4px;top:126.1px;width:38.5px;height:16.2px;background:#fff;border:1px solid #e9e6dc;box-shadow:0 1px 0 #e4e0d4"></div>
<div class="t" style="left:987.4px;top:129.1px;font-size:9.6px;color:#444;font-weight:400;">42.04</div>
<div class="a" style="left:1101.9px;top:126.1px;width:38.3px;height:16.2px;background:#fff;border:1px solid #e9e6dc;box-shadow:0 1px 0 #e4e0d4"></div>
<div class="t" style="left:1105.9px;top:129.1px;font-size:9.6px;color:#444;font-weight:400;">56.03</div>
<div class="a" style="left:983.4px;top:155.1px;width:38.5px;height:15.7px;background:#fff;border:1px solid #e9e6dc;box-shadow:0 1px 0 #e4e0d4"></div>
<div class="t" style="left:987.4px;top:157.8px;font-size:9.6px;color:#444;font-weight:400;">100</div>
<div class="a" style="left:983.4px;top:183.6px;width:38.5px;height:16.2px;background:#fff;border:1px solid #e9e6dc;box-shadow:0 1px 0 #e4e0d4"></div>
<div class="t" style="left:987.4px;top:186.6px;font-size:9.6px;color:#444;font-weight:400;">0</div>
<div class="a" style="left:1050.9px;top:182.7px;width:30.4px;height:18.3px;background:#fff;border:1px solid #e9e6dc;box-shadow:0 1px 0 #e4e0d4"></div>
<div class="t" style="left:916.1px;top:187.7px;width:300px;text-align:center;font-size:9.6px;color:#444;font-weight:400;">90</div>
<div class="a" style="left:1092px;top:182.7px;width:31.3px;height:18.3px;background:#fff;border:1px solid #e9e6dc;box-shadow:0 1px 0 #e4e0d4"></div>
<div class="t" style="left:957.7px;top:187.7px;width:300px;text-align:center;font-size:9.6px;color:#444;font-weight:400;">180</div>
<div class="t" style="left:922.6px;top:218.9px;font-size:9.6px;color:#5a5a5a;font-weight:400;">Adjust lightness</div>
<div class="t" style="left:1036.6px;top:218.9px;font-size:9.6px;color:#5a5a5a;font-weight:400;">Darker</div>
<div class="t" style="left:1142.5px;top:218.9px;font-size:9.6px;color:#5a5a5a;font-weight:400;">Lighter</div>
<div class="t" style="left:922.6px;top:244.8px;font-size:9.6px;color:#5a5a5a;font-weight:400;">Magic wand tolerance</div>
<div class="t" style="left:1047.5px;top:244.8px;font-size:9.6px;color:#5a5a5a;font-weight:400;">Min</div>
<div class="t" style="left:1142.5px;top:244.8px;font-size:9.6px;color:#5a5a5a;font-weight:400;">Max</div>
<div class="a" style="left:1074.6px;top:220px;width:57px;height:2.6px;background:#e3e3df;"></div>
<div class="a" style="left:1074.6px;top:245.8px;width:57px;height:2.6px;background:#e3e3df;"></div>
<svg style="left:0;top:0" width="1200" height="300"><path d="M1074.2,214.6 H1084.2 V225.2 L1079.2,228.8 L1074.2,225.2 Z" fill="#2f6dbb"/><path d="M1098.4,240.2 H1108 V251.2 L1103.2,254.9 L1098.4,251.2 Z" fill="#2f6dbb"/></svg>
<div class="a" style="left:1120.5px;top:312.4px;width:64.8px;height:19px;background:#fff;border:1px solid #dedbd0;border-radius:2px"></div>
<div class="t" style="left:1002.9px;top:317.6px;width:300px;text-align:center;font-size:9.6px;color:#444;font-weight:400;">Apply</div>
<div class="a" style="left:919px;top:420px;width:281px;height:4px;background:#ebe5d1;"></div>
<div class="a" style="left:919px;top:424.3px;width:281px;height:11.7px;background:#125f56;"></div>
<div class="t" style="left:921.5px;top:426.1px;font-size:8.6px;color:#b9d8cf;font-weight:400;">Sequence</div>
<div class="a" style="left:920px;top:436px;width:280px;height:201px;background:#ffffff;"></div>
<svg style="left:921px;top:438px" width="14" height="12"><path d="M3,0.5 H1 V11 H3 M10,0.5 H12 V11 H10" stroke="#777" stroke-width="0.9" fill="none"/></svg>
<div class="t" style="left:777.5px;top:439.5px;width:300px;text-align:center;font-size:9px;color:#222;font-weight:400;">&#9733;</div>
<div class="t" style="left:935.5px;top:439.4px;font-size:9.6px;color:#444;font-weight:400;">All items</div>
<div class="a" style="left:919px;top:637px;width:281px;height:16px;background:#ede7d5;"></div>
<div class="a" style="left:921px;top:638px;width:20px;height:14px;background:#f5f2e8;"></div>
<div class="a" style="left:941px;top:638px;width:20px;height:14px;background:#e9e3d0;"></div>
<div class="a" style="left:961px;top:638px;width:20px;height:14px;background:#e9e3d0;"></div>
<div class="a" style="left:981px;top:638px;width:20px;height:14px;background:#e9e3d0;"></div>
<div class="a" style="left:1001px;top:638px;width:21px;height:14px;background:#e9e3d0;"></div>
<svg style="left:0;top:0" width="1200" height="675">
<path d="M927,641 H937 M927,644.5 H937 M927,648 H937" stroke="#555" stroke-width="1.3"/><circle cx="925" cy="641" r="0.8" fill="#555"/><circle cx="925" cy="644.5" r="0.8" fill="#555"/><circle cx="925" cy="648" r="0.8" fill="#555"/>
<path d="M947,641 L955,640 V649.5 L947,650.5 Z" fill="#666"/>
<polygon points="971,639.3 972.9,643.2 977,643.5 973.9,646.2 974.9,650.3 971,648.1 967.1,650.3 968.1,646.2 965,643.5 969.1,643.2" fill="#555"/>
<path d="M992,650.5 C989,646 988.5,644.5 988.5,643.2 A3.5,3.5 0 0 1 995.5,643.2 C995.5,644.5 995,646 992,650.5 Z" fill="#666"/><circle cx="992" cy="643.2" r="1.3" fill="#ede7d5"/>
<path d="M1007.5,640.5 H1009.5 L1011.5,647 H1017 L1018.5,642.5 H1010.5" stroke="#666" stroke-width="1.4" fill="none"/><circle cx="1012" cy="649.3" r="1.1" fill="#666"/><circle cx="1016.5" cy="649.3" r="1.1" fill="#666"/>
</svg>
<div class="a" style="left:30px;top:640.5px;width:56px;height:11px;background:#f6f4ec;"></div>
<div class="t" style="left:33.5px;top:641.6px;font-size:9.2px;color:#333;font-weight:700;">Design6</div>
<svg style="left:76px;top:642px" width="10" height="9"><path d="M1.5,1 L8,7.5 M8,1 L1.5,7.5" stroke="#444" stroke-width="1.2"/></svg>
<svg style="left:9px;top:655px" width="8" height="10"><path d="M7,1 L1.5,5 L7,9 Z" fill="#c4c0b4"/></svg>
<div class="a" style="left:21.1px;top:653.9px;width:27.7px;height:12.8px;background:#1b6f8e"></div>
<div class="t" style="left:-115.0px;top:656.1px;width:300px;text-align:center;font-size:9.4px;color:#d8ecf2;font-weight:400;">1</div>
<div class="a" style="left:50.8px;top:653.9px;width:27.7px;height:12.8px;background:#bf2f2a"></div>
<div class="t" style="left:-85.4px;top:656.1px;width:300px;text-align:center;font-size:9.4px;color:#f8dcdc;font-weight:400;">2</div>
<div class="a" style="left:80.4px;top:653.9px;width:27.7px;height:12.8px;background:#1e7c3b"></div>
<div class="t" style="left:-55.7px;top:656.1px;width:300px;text-align:center;font-size:9.4px;color:#d8f0dc;font-weight:400;">3</div>
<div class="a" style="left:110.1px;top:653.9px;width:27.7px;height:12.8px;background:#f08c22"></div>
<div class="t" style="left:-26.0px;top:656.1px;width:300px;text-align:center;font-size:9.4px;color:#fde8cc;font-weight:400;">4</div>
<div class="a" style="left:139.8px;top:653.9px;width:27.7px;height:12.8px;background:#f6b52f"></div>
<div class="t" style="left:3.6px;top:656.1px;width:300px;text-align:center;font-size:9.4px;color:#fdf0c8;font-weight:400;">5</div>
<div class="a" style="left:169.5px;top:653.9px;width:27.7px;height:12.8px;background:#a9d78f"></div>
<div class="t" style="left:33.3px;top:656.1px;width:300px;text-align:center;font-size:9.4px;color:#e8f6e0;font-weight:400;">6</div>
<div class="a" style="left:199.1px;top:653.9px;width:27.7px;height:12.8px;background:#b96b2b"></div>
<div class="t" style="left:63.0px;top:656.1px;width:300px;text-align:center;font-size:9.4px;color:#f6e0cc;font-weight:400;">7</div>
<div class="a" style="left:228.8px;top:653.9px;width:27.7px;height:12.8px;background:#8b4aa1"></div>
<div class="t" style="left:92.6px;top:656.1px;width:300px;text-align:center;font-size:9.4px;color:#eedcf4;font-weight:400;">8</div>
<div class="a" style="left:258.5px;top:653.9px;width:27.7px;height:12.8px;background:#2c91d1"></div>
<div class="t" style="left:122.3px;top:656.1px;width:300px;text-align:center;font-size:9.4px;color:#dceef8;font-weight:400;">9</div>
<div class="a" style="left:288.1px;top:653.9px;width:27.7px;height:12.8px;background:#f8d94b"></div>
<div class="t" style="left:152.0px;top:656.1px;width:300px;text-align:center;font-size:9.4px;color:#444;font-weight:400;">10</div>
<div class="a" style="left:317.8px;top:653.9px;width:27.7px;height:12.8px;background:#f5c1a2"></div>
<div class="t" style="left:181.7px;top:656.1px;width:300px;text-align:center;font-size:9.4px;color:#555;font-weight:400;">11</div>
<div class="a" style="left:347.5px;top:653.9px;width:27.7px;height:12.8px;background:#e8527b"></div>
<div class="t" style="left:211.3px;top:656.1px;width:300px;text-align:center;font-size:9.4px;color:#fee;font-weight:400;">12</div>
<div class="a" style="left:377.1px;top:653.9px;width:27.7px;height:12.8px;background:#7b5b3b"></div>
<div class="t" style="left:241.0px;top:656.1px;width:300px;text-align:center;font-size:9.4px;color:#fed;font-weight:400;">13</div>
<div class="a" style="left:406.8px;top:653.9px;width:27.7px;height:12.8px;background:#a9a9a9"></div>
<div class="t" style="left:270.7px;top:656.1px;width:300px;text-align:center;font-size:9.4px;color:#eee;font-weight:400;">14</div>
<div class="a" style="left:436.5px;top:653.9px;width:27.7px;height:12.8px;background:#d9c9a2"></div>
<div class="t" style="left:300.3px;top:656.1px;width:300px;text-align:center;font-size:9.4px;color:#444;font-weight:400;">15</div>
<div class="a" style="left:466.2px;top:653.9px;width:27.7px;height:12.8px;background:#c97122"></div>
<div class="t" style="left:330.0px;top:656.1px;width:300px;text-align:center;font-size:9.4px;color:#fee;font-weight:400;">16</div>
<div class="a" style="left:495.8px;top:653.9px;width:27.7px;height:12.8px;background:#6f7561"></div>
<div class="t" style="left:359.7px;top:656.1px;width:300px;text-align:center;font-size:9.4px;color:#eee;font-weight:400;">17</div>
<div class="a" style="left:525.5px;top:653.9px;width:27.7px;height:12.8px;background:#d9c9a2"></div>
<div class="t" style="left:389.3px;top:656.1px;width:300px;text-align:center;font-size:9.4px;color:#444;font-weight:400;">18</div>
<div class="a" style="left:555.2px;top:653.9px;width:27.7px;height:12.8px;background:#fbfbfb"></div>
<div class="t" style="left:419.0px;top:656.1px;width:300px;text-align:center;font-size:9.4px;color:#444;font-weight:400;">19</div>
<div class="a" style="left:584.8px;top:653.9px;width:27.7px;height:12.8px;background:#1b1f2e"></div>
<div class="t" style="left:448.7px;top:656.1px;width:300px;text-align:center;font-size:9.4px;color:#eee;font-weight:400;">20</div>
<div class="a" style="left:881.3px;top:653.3px;width:28.6px;height:12px;border:1px solid #e2dcc8;border-radius:1px"></div>
<div class="a" style="left:910.9px;top:653.3px;width:28.6px;height:12px;border:1px solid #e2dcc8;border-radius:1px"></div>
<div class="a" style="left:940.5px;top:653.3px;width:28.6px;height:12px;border:1px solid #e2dcc8;border-radius:1px"></div>
<div class="a" style="left:970.1px;top:653.3px;width:28.6px;height:12px;border:1px solid #e2dcc8;border-radius:1px"></div>
<div class="a" style="left:999.7px;top:653.3px;width:28.6px;height:12px;border:1px solid #e2dcc8;border-radius:1px"></div>
<div class="a" style="left:1029.3px;top:653.3px;width:28.6px;height:12px;border:1px solid #e2dcc8;border-radius:1px"></div>
<svg style="left:0;top:0" width="1200" height="675">
<path d="M1093.5,656.5 L1098,660 L1093.5,663.5 Z" fill="#c4c0b4"/>
<path d="M1112.5,660 H1119.5 M1116,656.5 V663.5" stroke="#444" stroke-width="2.2"/>
<path d="M1133.2,660 H1140" stroke="#555" stroke-width="2.2"/>
<rect x="1153.5" y="655.5" width="9.5" height="6.5" fill="#fff" stroke="#555" stroke-width="1.1"/><path d="M1156,664.5 H1160.5 M1158.2,662 V664.5" stroke="#555" stroke-width="1.1"/>
<circle cx="1178.8" cy="656" r="0.9" fill="#555"/><circle cx="1178.8" cy="660" r="0.9" fill="#555"/><circle cx="1178.8" cy="664" r="0.9" fill="#555"/>
</svg>
<svg style="left:0;top:0" width="1200" height="675"><ellipse cx="527" cy="153.5" rx="37.45" ry="32.95" fill="none" stroke="rgba(222,215,20,0.82)" stroke-width="12.4"/></svg>
<svg style="left:0;top:0" width="1200" height="675"><path d="M0,132 H491.2 A65.8,65.8 0 0 1 491.2,247 H0 Z" fill="#13704b"/></svg>
<div class="t" style="left:112px;top:165px;font-size:44px;font-weight:700;color:#fff;letter-spacing:0px;-webkit-text-stroke:0.5px #13704b">Backdrop Tool</div>
<svg style="left:0;top:0" width="1200" height="675">
<defs><clipPath id="lc"><rect x="33.9" y="455.5" width="100" height="92" rx="9"/></clipPath></defs>
<rect x="30" y="452.4" width="187.6" height="186.8" rx="12.5" fill="#68a47b"/>
<g clip-path="url(#lc)"><path d="M20,440 H400 V1000 H20 Z M129.7,551 m-95.7,0 a95.7,95.7 0 1,0 191.4,0 a95.7,95.7 0 1,0 -191.4,0 Z" fill="rgba(255,255,255,0.33)" fill-rule="evenodd"/></g>
<g fill="none" stroke="#fff" stroke-linejoin="miter">
<path d="M84.3,575.7 V488.9 H102 C111,488.9 116.4,494 116.4,504 V519 C116.4,530 111,535.3 102,535.3 H84.3" stroke-width="6.4"/>
<path d="M163,510 V503 C163,494 157,488.9 146.6,488.9 C136,488.9 130.7,495 130.7,505 C130.7,514 134,520 140,526 L154,541 C160.5,548 163,554 163,561 C163,569.5 157,573.6 146.6,573.6 C136,573.6 130.7,568 130.7,559 V549" stroke-width="6.4"/>
<g stroke-width="2.1">
<path d="M58.8,591.65 V621.45 H63 C67.5,621.45 69.55,618 69.55,613 V600 C69.55,595 67.5,591.65 63,591.65 Z"/>
<path d="M88.5,591.65 H77.95 V621.45 H88.5 M77.95,606.25 H87"/>
<path d="M107,599.5 V597.5 C107,593.8 104.8,591.65 100.9,591.65 C97,591.65 94.8,594 94.8,598 C94.8,601.5 96,603.5 98.5,606 L103.5,610.5 C106,613 107,615 107,617.5 C107,619.8 105,621.45 100.9,621.45 C96.8,621.45 94.8,619.3 94.8,615.5 V613.5"/>
<path d="M113.55,590.6 V622.5"/>
<path d="M132.45,599 C132.45,594.5 130,591.65 126.45,591.65 C122.9,591.65 120.45,594.5 120.45,599 V614 C120.45,618.5 122.9,621.45 126.45,621.45 C130,621.45 132.45,618.5 132.45,614 V607 H127"/>
<path d="M139.15,622.5 V591.65 L151.7,621.45 V590.6"/>
<path d="M169.5,591.65 H158.8 V621.45 H169.5 M158.8,606.25 H168"/>
<path d="M176,622.5 V591.65 H181.5 C185.5,591.65 187.7,594 187.7,598.5 V600.5 C187.7,605 185.5,607.3 181.5,607.3 H176 M183,607.3 C186.5,608 187.7,610 187.7,613 V622.5"/>
</g></g>
</svg>
<svg style="left:0;top:0" width="1200" height="675"><ellipse cx="737.6" cy="61.75" rx="40.9" ry="39.65" fill="none" stroke="#e31b23" stroke-width="7"/></svg>
</body></html>
